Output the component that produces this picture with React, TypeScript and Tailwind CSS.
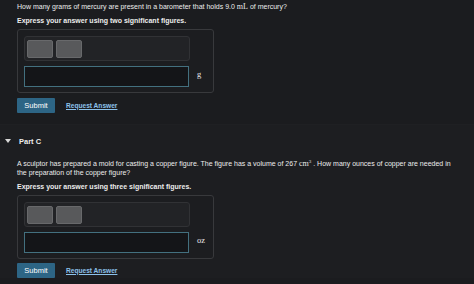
import React from "react";

function AnswerBox({ unit }: { unit: React.ReactNode }) {
  return (
    <div className="inline-flex flex-col rounded-[3px] border border-[#38393c] bg-[#1c1d20] px-[6px] pt-[6px] pb-[5px]">
      <div className="flex items-end gap-[7px]">
        <div className="flex flex-col gap-[5px]">
          <div className="flex h-[25px] w-[166px] items-center gap-[3px] rounded-[3px] border border-[#313235] bg-[#222326] px-[2px]">
            <div className="h-[18px] w-[26px] rounded-[2px] border border-[#68696b] bg-[#58595b]" />
            <div className="h-[18px] w-[26px] rounded-[2px] border border-[#68696b] bg-[#58595b]" />
          </div>
          <div className="h-[21px] w-[165px] border border-[#43707f] bg-[#141518]" />
        </div>
        <div className="mb-[6px] min-w-[10px] font-['Liberation_Serif',serif] text-[8.5px] text-[#e8e8e8]">
          {unit}
        </div>
      </div>
    </div>
  );
}

function Actions() {
  return (
    <div className="flex items-center gap-[11px]">
      <button className="h-[15px] w-[38px] rounded-[1px] bg-[#2d6585] text-[7.5px] text-white">
        Submit
      </button>
      <a className="text-[6.6px] font-bold text-[#8cc1ea] underline underline-offset-1">
        Request Answer
      </a>
    </div>
  );
}

export default function App() {
  return (
    <div className="h-[284px] w-[474px] overflow-hidden bg-[#1b1c1f] font-['Liberation_Sans',Arial,sans-serif] text-[#ececec]">
      <div className="px-[17px] pt-[2px]">
        <p className="text-[7px] leading-[9px]">
          How many grams of mercury are present in a barometer that holds 9.0{" "}
          <span className="font-['Liberation_Serif',serif] text-[8px]">mL</span> of mercury?
        </p>
        <p className="mt-[5px] text-[7px] font-bold leading-[9px]">
          Express your answer using two significant figures.
        </p>
        <div className="mt-[4px]">
          <AnswerBox unit="g" />
        </div>
        <div className="mt-[5px]">
          <Actions />
        </div>
      </div>

      <div className="mt-[11px] border-t border-[#1f2023] bg-[#1d1e21] pt-[12px]">
        <div className="flex items-center pl-[5px]">
          <svg width="6" height="5" viewBox="0 0 6 5" className="mr-[8px]">
            <path d="M0 0 L6 0 L3 4 Z" fill="#d8d8d8" />
          </svg>
          <span className="text-[7.5px] font-bold leading-[9px]">Part C</span>
        </div>
        <div className="px-[17px] pt-[14px]">
          <p className="text-[7px] leading-[8.5px]">
            A sculptor has prepared a mold for casting a copper figure. The figure has a volume of 267{" "}
            <span className="font-['Liberation_Serif',serif] text-[8px] leading-none">
              cm
              <span className="relative top-[-3px] text-[5px] leading-none">3</span>
            </span>{" "}
            . How many ounces of copper are needed in the preparation of the copper figure?
          </p>
          <p className="mt-[5px] text-[7px] font-bold leading-[9px]">
            Express your answer using three significant figures.
          </p>
          <div className="mt-[4px]">
            <AnswerBox unit="oz" />
          </div>
          <div className="mt-[4px]">
            <Actions />
          </div>
        </div>
      </div>
    </div>
  );
}
